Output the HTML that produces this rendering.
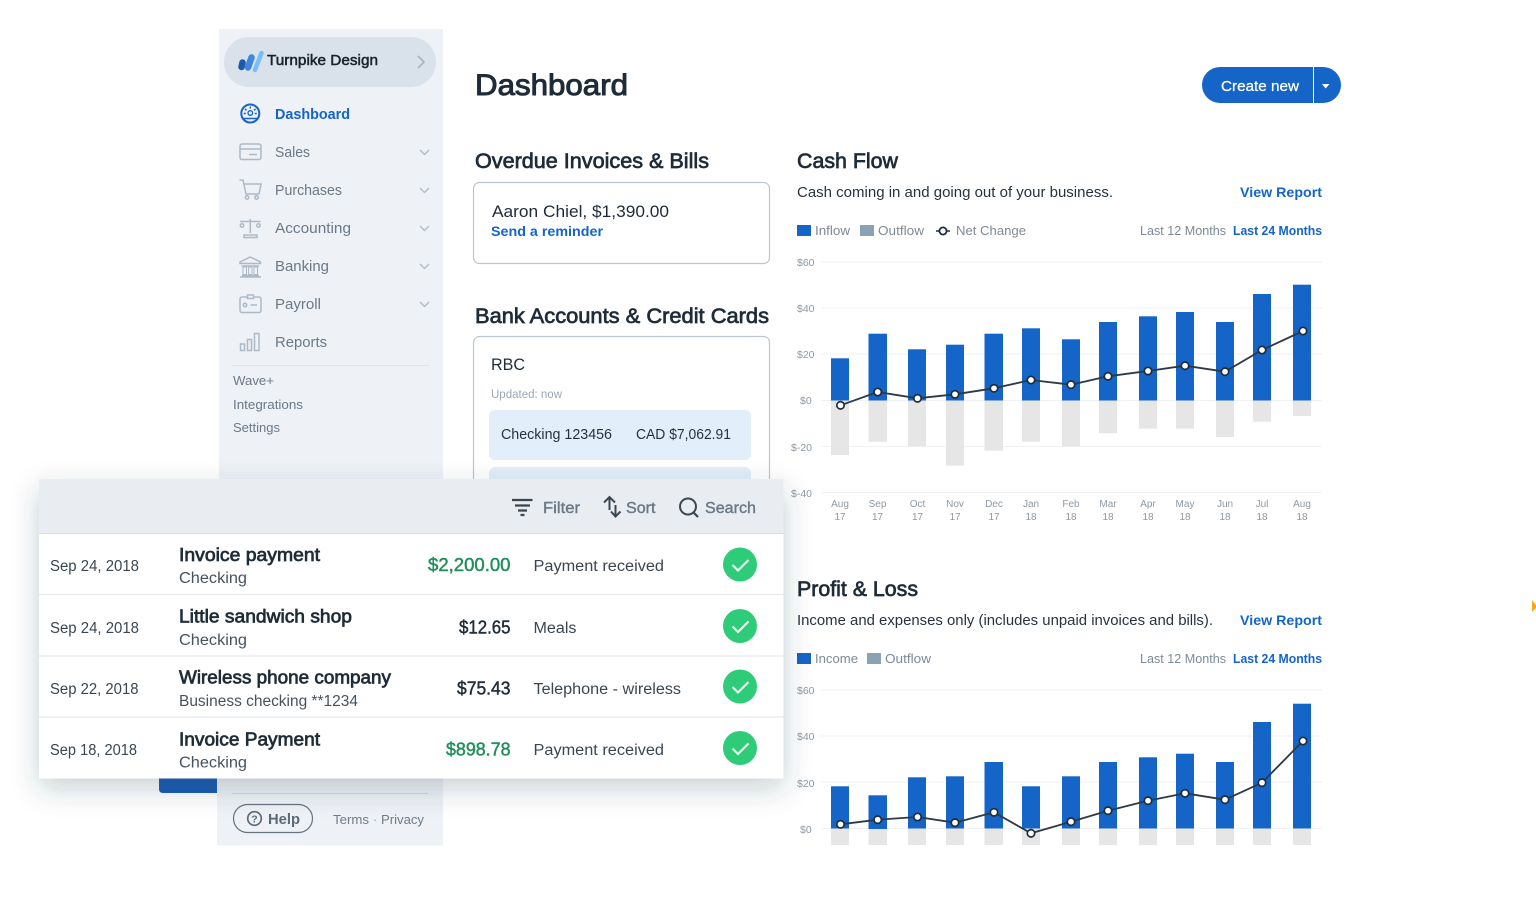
<!DOCTYPE html>
<html lang="en">
<head>
<meta charset="utf-8">
<title>Dashboard</title>
<style>
html,body{margin:0;padding:0;background:#fff;width:1536px;height:902px;overflow:hidden}
svg{display:block;position:absolute;left:0;top:0;filter:blur(.35px)}
text{font-family:"Liberation Sans",Arial,sans-serif;white-space:pre}
.h{font-size:21px;fill:#1f2c38;stroke:#1f2c38;stroke-width:.7px}
.nav{font-size:15px;fill:#6b7986}
.sub{font-size:13px;fill:#6b7986}
.blue{fill:#1565c8;font-weight:bold}
.leg{font-size:13px;fill:#7d8a96}
.ax{font-size:10.5px;fill:#8e99a3}
.mo{font-size:10px;fill:#8e99a3;text-anchor:middle}
.date{font-size:15.5px;fill:#3a4650}
.ttl{font-size:18px;fill:#1f2c38;stroke:#1f2c38;stroke-width:.7px}
.acc{font-size:15.5px;fill:#46525d}
.amt{font-size:18px;stroke-width:.45px}
.ic{fill:none;stroke:#adbac6;stroke-width:1.5}
.chev{fill:none;stroke:#b4bfc9;stroke-width:1.5}
.g{stroke:#f0f2f4;stroke-width:1}
.in{fill:#1565c8}
.out{fill:#e6e6e6}
.ln{fill:none;stroke:#2c3a47;stroke-width:1.8;stroke-linejoin:round}
.dot{fill:#fff;stroke:#1f2c38;stroke-width:1.7}
.tb{font-size:15.5px;fill:#6b7986;stroke:#6b7986;stroke-width:.4px}
</style>
</head>
<body>
<svg width="1536" height="902" viewBox="0 0 1536 902" xmlns="http://www.w3.org/2000/svg">
<defs>
<filter id="sh" x="-10%" y="-15%" width="120%" height="140%">
<feDropShadow dx="0" dy="10" stdDeviation="14" flood-color="#2a3a4a" flood-opacity=".24"/>
</filter>
</defs>

<!-- Sidebar -->
<rect x="219" y="29" width="224" height="460" fill="#eef1f6"/>
<rect x="217" y="770" width="226" height="75.500" fill="#eef1f6"/>
<rect x="224" y="37" width="212" height="50" rx="25" fill="#d9e1ea"/>
<!-- logo -->
<path d="M241.500 67 L242.500 62.500" stroke="#1a5bb0" stroke-width="6.500" stroke-linecap="round" fill="none"/>
<path d="M248 67.500 L251.500 57.500" stroke="#3f86dc" stroke-width="6.500" stroke-linecap="round" fill="none"/>
<path d="M255 70 L261.500 53" stroke="#79bdf7" stroke-width="4.500" stroke-linecap="round" fill="none"/>
<text x="267" y="65" font-size="14.500" fill="#17232e" stroke="#17232e" stroke-width=".5" textLength="111" lengthAdjust="spacingAndGlyphs">Turnpike Design</text>
<path d="M418 56 L424 62 L418 68" fill="none" stroke="#a7b3bf" stroke-width="1.600"/>

<!-- dashboard icon -->
<circle cx="250.300" cy="113.500" r="9" fill="none" stroke="#1565c8" stroke-width="2"/>
<circle cx="250.300" cy="113" r="2.300" fill="none" stroke="#1565c8" stroke-width="1.400"/>
<path d="M242 118.500 H258.500 M250.300 106.500 V108.500 M245 109 L246.500 110.300 M255.600 109 L254 110.300 M243.800 113.500 H245.800 M254.800 113.500 H256.800" stroke="#1565c8" stroke-width="1.500" fill="none"/>
<text x="275" y="119" class="nav blue" textLength="75" lengthAdjust="spacingAndGlyphs">Dashboard</text>

<!-- sales icon -->
<rect x="240" y="144" width="21" height="15.500" rx="2" class="ic"/>
<path d="M240 149 H261 M249 154.500 H257" class="ic"/>
<text x="275" y="157" class="nav" textLength="35" lengthAdjust="spacingAndGlyphs">Sales</text>
<path d="M420 150 L424.500 154.500 L429 150" class="chev"/>

<!-- cart icon -->
<path d="M239.500 180 H243 L246 194 H259 L261 184 H244" class="ic"/>
<circle cx="247" cy="197.500" r="1.700" class="ic"/><circle cx="256.500" cy="197.500" r="1.700" class="ic"/>
<text x="275" y="195" class="nav" textLength="67" lengthAdjust="spacingAndGlyphs">Purchases</text>
<path d="M420 188 L424.500 192.500 L429 188" class="chev"/>

<!-- scales icon -->
<path d="M240 221.500 H260.500 M250.300 219 V233 M244 235 H257 V237.500 H244 Z" class="ic"/>
<circle cx="242" cy="225.500" r="1.700" class="ic"/><circle cx="258.500" cy="225.500" r="1.700" class="ic"/>
<text x="275" y="233" class="nav" textLength="76" lengthAdjust="spacingAndGlyphs">Accounting</text>
<path d="M420 226 L424.500 230.500 L429 226" class="chev"/>

<!-- bank icon -->
<path d="M240 262 L250.300 257 L260.500 262 V263.500 H240 Z M241.500 266 H259 M242 275.500 H259 M240 277 H261" class="ic"/>
<path d="M243 267 H246.500 V274.500 H243 Z M248.600 267 H252 V274.500 H248.600 Z M254 267 H257.500 V274.500 H254 Z" class="ic" style="stroke-width:1"/>
<text x="275" y="271" class="nav" textLength="54" lengthAdjust="spacingAndGlyphs">Banking</text>
<path d="M420 264 L424.500 268.500 L429 264" class="chev"/>

<!-- payroll icon -->
<rect x="240" y="297" width="21" height="15.500" rx="2" class="ic"/>
<rect x="247.500" y="295" width="6" height="3.500" class="ic" style="fill:#eef1f6"/>
<circle cx="245" cy="305" r="1.700" class="ic"/>
<path d="M250.500 305 H257" class="ic"/>
<text x="275" y="309" class="nav" textLength="46" lengthAdjust="spacingAndGlyphs">Payroll</text>
<path d="M420 302 L424.500 306.500 L429 302" class="chev"/>

<!-- reports icon -->
<rect x="240.500" y="344" width="4" height="6.500" class="ic"/>
<rect x="247.500" y="339.500" width="4" height="11" class="ic"/>
<rect x="254.500" y="333.500" width="4.500" height="17" class="ic"/>
<text x="275" y="347" class="nav" textLength="52" lengthAdjust="spacingAndGlyphs">Reports</text>

<path d="M232 365.500 H429" stroke="#dfe4ea" stroke-width="1"/>
<text x="233" y="385" class="sub" textLength="41" lengthAdjust="spacingAndGlyphs">Wave+</text>
<text x="233" y="409" class="sub" textLength="70" lengthAdjust="spacingAndGlyphs">Integrations</text>
<text x="233" y="432" class="sub" textLength="47" lengthAdjust="spacingAndGlyphs">Settings</text>

<!-- Sidebar footer -->
<path d="M232 793.500 H428" stroke="#d3d9e0" stroke-width="1"/>
<rect x="233.500" y="804.500" width="79" height="28" rx="14" fill="none" stroke="#66747f" stroke-width="1.200"/>
<circle cx="254.500" cy="818.500" r="6.800" fill="none" stroke="#5c6a76" stroke-width="1.700"/>
<text x="254.500" y="822.500" font-size="10.500" font-weight="bold" fill="#5c6a76" text-anchor="middle">?</text>
<text x="268" y="824" font-size="14.500" font-weight="bold" fill="#5c6a76" textLength="32" lengthAdjust="spacingAndGlyphs">Help</text>
<text x="333" y="824" font-size="13" fill="#6f7c88" textLength="36" lengthAdjust="spacingAndGlyphs">Terms</text>
<text x="373" y="824" font-size="13" fill="#9aa5af">·</text>
<text x="381" y="824" font-size="13" fill="#6f7c88" textLength="43" lengthAdjust="spacingAndGlyphs">Privacy</text>

<!-- Header -->
<text x="475" y="95" font-size="30" fill="#1f2c38" stroke="#1f2c38" stroke-width="1" textLength="153" lengthAdjust="spacingAndGlyphs">Dashboard</text>
<path d="M1220 67 H1323 A18 18 0 0 1 1323 103 H1220 A18 18 0 0 1 1220 67 Z" fill="#1565c8"/>
<path d="M1313.500 67 V103" stroke="#fff" stroke-width="1"/>
<text x="1221" y="91" font-size="15" fill="#fff" stroke="#fff" stroke-width=".25" textLength="78" lengthAdjust="spacingAndGlyphs">Create new</text>
<path d="M1322 84 H1329.500 L1325.700 88.500 Z" fill="#fff"/>

<!-- Overdue -->
<text x="475" y="168" class="h" textLength="234" lengthAdjust="spacingAndGlyphs">Overdue Invoices &amp; Bills</text>
<rect x="473.500" y="182.500" width="296" height="81" rx="6" fill="#fff" stroke="#b9c7d3" stroke-width="1.200"/>
<text x="492" y="217" font-size="17" fill="#1f2c38" textLength="177" lengthAdjust="spacingAndGlyphs">Aaron Chiel, $1,390.00</text>
<text x="491" y="236" font-size="14" class="blue" textLength="112" lengthAdjust="spacingAndGlyphs">Send a reminder</text>

<!-- Bank -->
<text x="475" y="323" class="h" textLength="294" lengthAdjust="spacingAndGlyphs">Bank Accounts &amp; Credit Cards</text>
<rect x="473.500" y="336.500" width="296" height="200" rx="6" fill="#fff" stroke="#b9c7d3" stroke-width="1.200"/>
<text x="491" y="370" font-size="17" fill="#1f2c38" textLength="34" lengthAdjust="spacingAndGlyphs">RBC</text>
<text x="491" y="398" font-size="11.500" fill="#9aa8b4" textLength="71" lengthAdjust="spacingAndGlyphs">Updated: now</text>
<rect x="489" y="410" width="262" height="50" rx="6" fill="#e3eefb"/>
<text x="501" y="439" font-size="14.500" fill="#26333f" textLength="111" lengthAdjust="spacingAndGlyphs">Checking 123456</text>
<text x="636" y="439" font-size="14.500" fill="#26333f" textLength="95" lengthAdjust="spacingAndGlyphs">CAD $7,062.91</text>
<rect x="489" y="467" width="262" height="50" rx="6" fill="#e3eefb"/>

<!-- Cash Flow -->
<text x="797" y="168" class="h" textLength="101" lengthAdjust="spacingAndGlyphs">Cash Flow</text>
<text x="797" y="197" font-size="14.500" fill="#26333f" textLength="316" lengthAdjust="spacingAndGlyphs">Cash coming in and going out of your business.</text>
<text x="1240" y="197" font-size="14" class="blue" textLength="82" lengthAdjust="spacingAndGlyphs">View Report</text>
<rect x="797" y="225" width="14" height="11" fill="#1565c8"/>
<text x="815" y="235" class="leg" textLength="35" lengthAdjust="spacingAndGlyphs">Inflow</text>
<rect x="860" y="225" width="14" height="11" fill="#8ba2b5"/>
<text x="878" y="235" class="leg" textLength="46" lengthAdjust="spacingAndGlyphs">Outflow</text>
<path d="M936 231 H950" stroke="#1f2c38" stroke-width="1.500"/>
<circle cx="943" cy="231" r="3.600" fill="#fff" stroke="#1f2c38" stroke-width="1.800"/>
<text x="956" y="235" class="leg" textLength="70" lengthAdjust="spacingAndGlyphs">Net Change</text>
<text x="1140" y="235" class="leg" textLength="86" lengthAdjust="spacingAndGlyphs">Last 12 Months</text>
<text x="1233" y="235" font-size="13" class="blue" textLength="89" lengthAdjust="spacingAndGlyphs">Last 24 Months</text>

<path class="g" d="M821 262 H1322 M821 308 H1322 M821 354 H1322 M821 400.500 H1322 M821 446.500 H1322 M821 492.500 H1322"/>
<g class="ax">
<text x="797" y="266">$60</text><text x="797" y="312">$40</text><text x="797" y="358">$20</text><text x="800" y="404">$0</text><text x="791" y="451">$-20</text><text x="791" y="497">$-40</text>
</g>
<g class="in">
<rect x="831" y="358.300" width="18" height="42.200"/>
<rect x="868.500" y="333.700" width="18.500" height="66.800"/>
<rect x="908" y="349.300" width="18" height="51.200"/>
<rect x="946" y="344.700" width="18" height="55.800"/>
<rect x="984.500" y="333.700" width="18.500" height="66.800"/>
<rect x="1022" y="328.300" width="18" height="72.200"/>
<rect x="1062" y="339.300" width="18" height="61.200"/>
<rect x="1099" y="322" width="18" height="78.500"/>
<rect x="1139" y="316.300" width="18" height="84.200"/>
<rect x="1176" y="312" width="18" height="88.500"/>
<rect x="1216" y="322" width="18" height="78.500"/>
<rect x="1253" y="294" width="18" height="106.500"/>
<rect x="1293" y="284.700" width="18" height="115.800"/>
</g>
<g class="out">
<rect x="831" y="400.500" width="18" height="54.500"/>
<rect x="868.500" y="400.500" width="18.500" height="41.200"/>
<rect x="908" y="400.500" width="18" height="45.800"/>
<rect x="946" y="400.500" width="18" height="65.200"/>
<rect x="984.500" y="400.500" width="18.500" height="50.200"/>
<rect x="1022" y="400.500" width="18" height="41.200"/>
<rect x="1062" y="400.500" width="18" height="45.800"/>
<rect x="1099" y="400.500" width="18" height="32.800"/>
<rect x="1139" y="400.500" width="18" height="28.200"/>
<rect x="1176" y="400.500" width="18" height="28.200"/>
<rect x="1216" y="400.500" width="18" height="36.500"/>
<rect x="1253" y="400.500" width="18" height="21.200"/>
<rect x="1293" y="400.500" width="18" height="15.500"/>
</g>
<polyline class="ln" points="840.500,405.300 877.700,392 917.500,398.300 955,394.300 994,388.300 1031,380 1071,384.700 1108,376.300 1148,371 1185,365.700 1225,371.700 1262,350 1303,331"/>
<g class="dot">
<circle cx="840.500" cy="405.300" r="3.700"/><circle cx="877.700" cy="392" r="3.700"/><circle cx="917.500" cy="398.300" r="3.700"/><circle cx="955" cy="394.300" r="3.700"/><circle cx="994" cy="388.300" r="3.700"/><circle cx="1031" cy="380" r="3.700"/><circle cx="1071" cy="384.700" r="3.700"/><circle cx="1108" cy="376.300" r="3.700"/><circle cx="1148" cy="371" r="3.700"/><circle cx="1185" cy="365.700" r="3.700"/><circle cx="1225" cy="371.700" r="3.700"/><circle cx="1262" cy="350" r="3.700"/><circle cx="1303" cy="331" r="3.700"/>
</g>
<g class="mo">
<text x="840" y="507">Aug</text><text x="840" y="520">17</text>
<text x="877.500" y="507">Sep</text><text x="877.500" y="520">17</text>
<text x="917.500" y="507">Oct</text><text x="917.500" y="520">17</text>
<text x="955" y="507">Nov</text><text x="955" y="520">17</text>
<text x="994" y="507">Dec</text><text x="994" y="520">17</text>
<text x="1031" y="507">Jan</text><text x="1031" y="520">18</text>
<text x="1071" y="507">Feb</text><text x="1071" y="520">18</text>
<text x="1108" y="507">Mar</text><text x="1108" y="520">18</text>
<text x="1148" y="507">Apr</text><text x="1148" y="520">18</text>
<text x="1185" y="507">May</text><text x="1185" y="520">18</text>
<text x="1225" y="507">Jun</text><text x="1225" y="520">18</text>
<text x="1262" y="507">Jul</text><text x="1262" y="520">18</text>
<text x="1302" y="507">Aug</text><text x="1302" y="520">18</text>
</g>

<!-- Profit & Loss -->
<text x="797" y="596" class="h" textLength="121" lengthAdjust="spacingAndGlyphs">Profit &amp; Loss</text>
<text x="797" y="625" font-size="14.500" fill="#26333f" textLength="416" lengthAdjust="spacingAndGlyphs">Income and expenses only (includes unpaid invoices and bills).</text>
<text x="1240" y="625" font-size="14" class="blue" textLength="82" lengthAdjust="spacingAndGlyphs">View Report</text>
<rect x="797" y="653" width="14" height="11" fill="#1565c8"/>
<text x="815" y="663" class="leg" textLength="43" lengthAdjust="spacingAndGlyphs">Income</text>
<rect x="867" y="653" width="14" height="11" fill="#8ba2b5"/>
<text x="885" y="663" class="leg" textLength="46" lengthAdjust="spacingAndGlyphs">Outflow</text>
<text x="1140" y="663" class="leg" textLength="86" lengthAdjust="spacingAndGlyphs">Last 12 Months</text>
<text x="1233" y="663" font-size="13" class="blue" textLength="89" lengthAdjust="spacingAndGlyphs">Last 24 Months</text>

<path class="g" d="M821 690 H1322 M821 736 H1322 M821 782 H1322 M821 828.500 H1322"/>
<g class="ax">
<text x="797" y="694">$60</text><text x="797" y="740">$40</text><text x="797" y="787">$20</text><text x="800" y="833">$0</text>
</g>
<g class="in">
<rect x="831" y="786.300" width="18" height="42.200"/>
<rect x="868.500" y="795.300" width="18.500" height="34"/>
<rect x="908" y="777.300" width="18" height="51.200"/>
<rect x="946" y="776.300" width="18" height="52.200"/>
<rect x="984.500" y="762" width="18.500" height="66.500"/>
<rect x="1022" y="786.300" width="18" height="42.200"/>
<rect x="1062" y="776.300" width="18" height="52.200"/>
<rect x="1099" y="762" width="18" height="66.500"/>
<rect x="1139" y="757.300" width="18" height="71.200"/>
<rect x="1176" y="753.700" width="18" height="74.800"/>
<rect x="1216" y="762" width="18" height="66.500"/>
<rect x="1253" y="722" width="18" height="106.500"/>
<rect x="1293" y="703.700" width="18" height="124.800"/>
</g>
<g class="out">
<rect x="831" y="828.500" width="18" height="16.500"/>
<rect x="868.500" y="829" width="18.500" height="16"/>
<rect x="908" y="828.500" width="18" height="16.500"/>
<rect x="946" y="828.500" width="18" height="16.500"/>
<rect x="984.500" y="828.500" width="18.500" height="16.500"/>
<rect x="1022" y="828.500" width="18" height="16.500"/>
<rect x="1062" y="828.500" width="18" height="16.500"/>
<rect x="1099" y="828.500" width="18" height="16.500"/>
<rect x="1139" y="828.500" width="18" height="16.500"/>
<rect x="1176" y="828.500" width="18" height="16.500"/>
<rect x="1216" y="828.500" width="18" height="16.500"/>
<rect x="1253" y="828.500" width="18" height="16.500"/>
<rect x="1293" y="828.500" width="18" height="16.500"/>
</g>
<polyline class="ln" points="840.500,824.300 877.700,819.700 917.500,817 955,822.700 994,812.300 1031,833.300 1071,821.700 1108,810.700 1148,800.700 1185,793.300 1225,799.700 1262,782.700 1303,741"/>
<g class="dot">
<circle cx="840.500" cy="824.300" r="3.700"/><circle cx="877.700" cy="819.700" r="3.700"/><circle cx="917.500" cy="817" r="3.700"/><circle cx="955" cy="822.700" r="3.700"/><circle cx="994" cy="812.300" r="3.700"/><circle cx="1031" cy="833.300" r="3.700"/><circle cx="1071" cy="821.700" r="3.700"/><circle cx="1108" cy="810.700" r="3.700"/><circle cx="1148" cy="800.700" r="3.700"/><circle cx="1185" cy="793.300" r="3.700"/><circle cx="1225" cy="799.700" r="3.700"/><circle cx="1262" cy="782.700" r="3.700"/><circle cx="1303" cy="741" r="3.700"/>
</g>

<!-- Blue tab beneath panel -->
<path d="M159 770 H217 V793 H163 Q159 793 159 789 Z" fill="#1a5cb5"/>

<!-- Transaction panel -->
<rect x="39" y="479" width="744.500" height="299.500" fill="#fff" filter="url(#sh)"/>
<rect x="39" y="479" width="744.500" height="54.500" fill="#e9edf2"/>
<path d="M39 533.500 H784" stroke="#d9dfe4" stroke-width="1" fill="none"/>

<!-- Filter icon -->
<path d="M512 500 H532.500 M515 505.500 H530 M518 510.500 H527 M520.500 515 H524.500" stroke="#3a4650" stroke-width="2.200" fill="none"/>
<text x="543" y="513" class="tb" textLength="37" lengthAdjust="spacingAndGlyphs">Filter</text>
<!-- Sort icon -->
<path d="M609.500 510 V497.500 M604 502.500 L609.500 497 L615 502.500" stroke="#3a4650" stroke-width="2" fill="none"/>
<path d="M615.500 505 V516 M611 511.500 L615.500 516.500 L620.500 511.500" stroke="#3a4650" stroke-width="2" fill="none"/>
<text x="626" y="513" class="tb" textLength="29.500" lengthAdjust="spacingAndGlyphs">Sort</text>
<!-- Search icon -->
<circle cx="688" cy="506.500" r="8" fill="none" stroke="#3a4650" stroke-width="2"/>
<path d="M693.500 512.500 L698 517" stroke="#3a4650" stroke-width="2.200" fill="none"/>
<text x="705" y="513" class="tb" textLength="51" lengthAdjust="spacingAndGlyphs">Search</text>

<!-- Rows -->
<path d="M39 594.500 H784 M39 656 H784 M39 717 H784" stroke="#e6e9ec" stroke-width="1.200"/>

<text x="50" y="571" class="date" textLength="89" lengthAdjust="spacingAndGlyphs">Sep 24, 2018</text>
<text x="179" y="561" class="ttl" textLength="141" lengthAdjust="spacingAndGlyphs">Invoice payment</text>
<text x="179" y="583" class="acc" textLength="68" lengthAdjust="spacingAndGlyphs">Checking</text>
<text x="428" y="571" class="amt" fill="#1f8f5a" stroke="#1f8f5a" textLength="82.500" lengthAdjust="spacingAndGlyphs">$2,200.00</text>
<text x="533.500" y="571" class="date" textLength="130.500" lengthAdjust="spacingAndGlyphs">Payment received</text>
<circle cx="740" cy="564.500" r="17" fill="#2ecb79"/>
<path d="M732.500 565 L738 570.500 L748.500 560" fill="none" stroke="#e6faee" stroke-width="2.200"/>

<text x="50" y="633" class="date" textLength="89" lengthAdjust="spacingAndGlyphs">Sep 24, 2018</text>
<text x="179" y="622.500" class="ttl" textLength="173" lengthAdjust="spacingAndGlyphs">Little sandwich shop</text>
<text x="179" y="645" class="acc" textLength="68" lengthAdjust="spacingAndGlyphs">Checking</text>
<text x="459" y="633.500" class="amt" fill="#1f2c38" stroke="#1f2c38" textLength="51.500" lengthAdjust="spacingAndGlyphs">$12.65</text>
<text x="533.500" y="633" class="date" textLength="43" lengthAdjust="spacingAndGlyphs">Meals</text>
<circle cx="740" cy="626" r="17" fill="#2ecb79"/>
<path d="M732.500 626.500 L738 632 L748.500 621.500" fill="none" stroke="#e6faee" stroke-width="2.200"/>

<text x="50" y="694" class="date" textLength="88.500" lengthAdjust="spacingAndGlyphs">Sep 22, 2018</text>
<text x="179" y="683.500" class="ttl" textLength="212" lengthAdjust="spacingAndGlyphs">Wireless phone company</text>
<text x="179" y="706" class="acc" textLength="179" lengthAdjust="spacingAndGlyphs">Business checking **1234</text>
<text x="457" y="694.500" class="amt" fill="#1f2c38" stroke="#1f2c38" textLength="53.500" lengthAdjust="spacingAndGlyphs">$75.43</text>
<text x="533.500" y="694" class="date" textLength="147.500" lengthAdjust="spacingAndGlyphs">Telephone - wireless</text>
<circle cx="740" cy="686.500" r="17" fill="#2ecb79"/>
<path d="M732.500 687 L738 692.500 L748.500 682" fill="none" stroke="#e6faee" stroke-width="2.200"/>

<text x="50" y="755" class="date" textLength="87" lengthAdjust="spacingAndGlyphs">Sep 18, 2018</text>
<text x="179" y="745.500" class="ttl" textLength="141" lengthAdjust="spacingAndGlyphs">Invoice Payment</text>
<text x="179" y="767.500" class="acc" textLength="68" lengthAdjust="spacingAndGlyphs">Checking</text>
<text x="446" y="755.500" class="amt" fill="#1f8f5a" stroke="#1f8f5a" textLength="64.500" lengthAdjust="spacingAndGlyphs">$898.78</text>
<text x="533.500" y="755" class="date" textLength="130.500" lengthAdjust="spacingAndGlyphs">Payment received</text>
<circle cx="740" cy="748" r="17" fill="#2ecb79"/>
<path d="M732.500 748.500 L738 754 L748.500 743.500" fill="none" stroke="#e6faee" stroke-width="2.200"/>

<!-- Orange marker at edge -->
<path d="M1532 600 L1536 605 V608 L1532 612 Z" fill="#f5a623"/>
</svg>
</body>
</html>
